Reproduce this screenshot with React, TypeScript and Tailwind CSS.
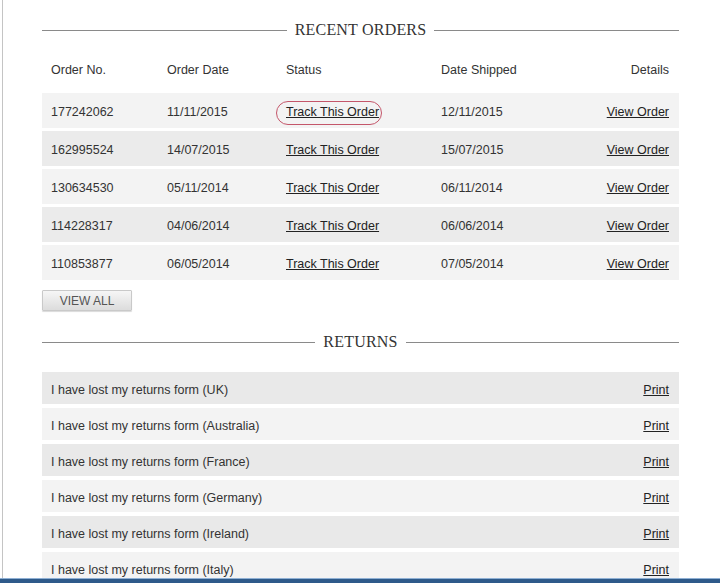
const orders = [
  { no: '177242062', date: '11/11/2015', shipped: '12/11/2015' },
  { no: '162995524', date: '14/07/2015', shipped: '15/07/2015' },
  { no: '130634530', date: '05/11/2014', shipped: '06/11/2014' },
  { no: '114228317', date: '04/06/2014', shipped: '06/06/2014' },
  { no: '110853877', date: '06/05/2014', shipped: '07/05/2014' },
];

const countries = ['UK', 'Australia', 'France', 'Germany', 'Ireland', 'Italy'];

function SectionTitle({ title }: { title: string }) {
  return (
    <div className="flex items-center h-5">
      <div className="flex-1 h-px bg-[#8a8a8a]" />
      <h2 className="px-[8px] text-[16px] leading-5 text-[#333] font-['Liberation_Serif',serif] tracking-[0.2px]">
        {title}
      </h2>
      <div className="flex-1 h-px bg-[#8a8a8a]" />
    </div>
  );
}

export default function App() {
  return (
    <div className="relative min-h-[583px] bg-white font-['Liberation_Sans',Arial,sans-serif] text-[12.5px] text-[#333] overflow-hidden">
      <div className="ml-[2px] border-l border-[#c4c4c4] min-h-[583px]">
        <div className="ml-[39px] w-[637px] pt-[20px]">
          {/* Recent orders */}
          <SectionTitle title="RECENT ORDERS" />

          <div className="grid grid-cols-[116px_119px_155px_1fr_auto] items-center h-[38px] mt-[11px] mb-[4px] pl-[9px] pr-[10px]">
            <span>Order No.</span>
            <span>Order Date</span>
            <span>Status</span>
            <span>Date Shipped</span>
            <span className="text-right">Details</span>
          </div>

          <div className="flex flex-col gap-[3px]">
            {orders.map((o, i) => (
              <div
                key={o.no}
                className={`grid grid-cols-[116px_119px_155px_1fr_auto] items-center h-[35px] pl-[9px] pr-[10px] pt-[4px] ${
                  i % 2 === 0 ? 'bg-[#f3f3f3]' : 'bg-[#ebebeb]'
                }`}
              >
                <span>{o.no}</span>
                <span>{o.date}</span>
                <span>
                  <a href="#" className="relative inline-block underline text-[#222]">
                    Track This Order
                    {i === 0 && (
                      <span className="absolute left-[-10px] right-[-3px] top-1/2 -translate-y-1/2 h-[24px] rounded-full border border-[#c4566a]" />
                    )}
                  </a>
                </span>
                <span>{o.shipped}</span>
                <a href="#" className="underline text-[#222] text-right">View Order</a>
              </div>
            ))}
          </div>

          <button className="mt-[10px] w-[90px] h-[21px] border border-[#c9c9c9] rounded-[1px] bg-gradient-to-b from-[#f6f6f6] to-[#dcdcdc] text-[12px] text-[#555] shadow-[0_1px_1px_rgba(0,0,0,0.15)]">
            VIEW ALL
          </button>

          {/* Returns */}
          <div className="mt-[21px]">
            <SectionTitle title="RETURNS" />
          </div>

          <div className="flex flex-col gap-[4px] mt-[20px]">
            {countries.map((c, i) => (
              <div
                key={c}
                className={`flex items-center justify-between h-[32px] pl-[9px] pr-[10px] pt-[4px] ${
                  i % 2 === 0 ? 'bg-[#e9e9e9]' : 'bg-[#f3f3f3]'
                }`}
              >
                <span>I have lost my returns form ({c})</span>
                <a href="#" className="underline text-[#222]">Print</a>
              </div>
            ))}
          </div>
        </div>
      </div>

      {/* window taskbar edge */}
      <div className="fixed left-0 right-0 bottom-0 h-[5px] bg-[#2e5a8a] border-t border-[#8fb0d4]" />
    </div>
  );
}
